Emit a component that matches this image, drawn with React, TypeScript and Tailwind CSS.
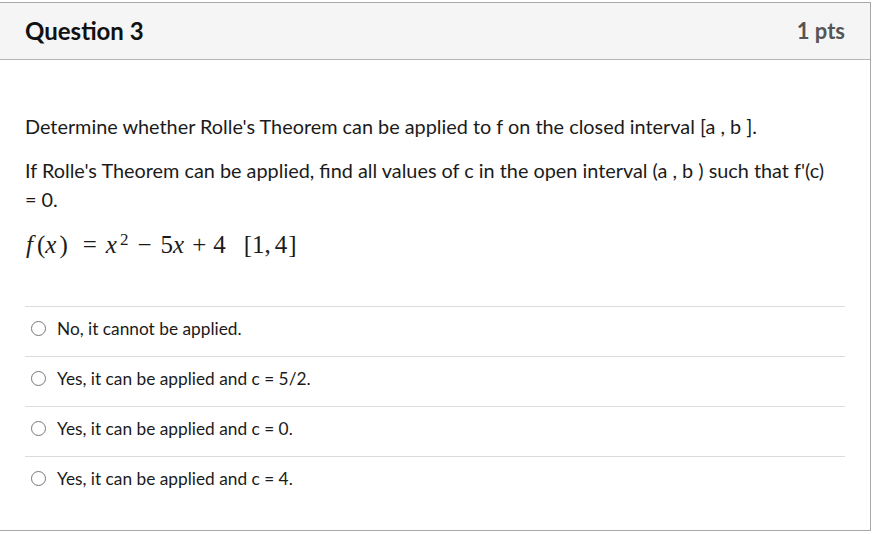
import React from "react";

const options = [
  "No, it cannot be applied.",
  "Yes, it can be applied and c = 5/2.",
  "Yes, it can be applied and c = 0.",
  "Yes, it can be applied and c = 4.",
];

export default function App() {
  return (
    <div className="w-[875px] h-[534px] bg-white pt-[2px] font-['Lato','Noto_Sans',sans-serif] text-[#1b1b1b]">
      <div className="w-[871px] h-[529px] border border-l-0 border-[#a8a8a8] flex flex-col">
        <div className="h-[57px] bg-[#f5f5f5] border-b border-[#b5b5b5] flex items-center justify-between pl-[25px] pr-[25px]">
          <h2 className="text-[24px] font-bold text-[#111] leading-none">Question 3</h2>
          <span className="text-[22px] font-bold text-[#555] leading-none">1 pts</span>
        </div>
        <div className="px-[25px] pt-[52px] text-[19.85px] leading-[29px]">
          <p>Determine whether Rolle's Theorem can be applied to f on the closed interval [a , b ].</p>
          <p className="mt-[15px]">
            If Rolle's Theorem can be applied, find all values of c in the open interval (a , b ) such that f'(c)
            <br />= 0.
          </p>
          <p className="mt-[14px] font-['Liberation_Serif',serif] text-[25px] leading-[34px] whitespace-nowrap">
            <i className="ml-[1px]">f</i>
            <span className="ml-[4px]">(</span>
            <i>x</i>
            <span className="ml-[3px]">)</span>
            <span className="ml-[15px]">=</span>
            <i className="ml-[9px]">x</i>
            <sup className="ml-[3px] text-[17px]">2</sup>
            <span className="ml-[9px]">−</span>
            <span className="ml-[9px]">5</span>
            <i>x</i>
            <span className="ml-[8px]">+</span>
            <span className="ml-[7px]">4</span>
            <span className="ml-[18px]">[</span>
            <span>1</span>
            <span>,</span>
            <span className="ml-[4px]">4</span>
            <span className="ml-[1px]">]</span>
          </p>
          <div className="mt-[44px]">
            {options.map((o) => (
              <div key={o} className="h-[50px] border-t border-[#dcdcdc] flex items-center pb-[6px]">
                <span className="w-[15px] h-[15px] rounded-full border border-[#777] ml-[6px] mr-[11px]" />
                <span className="text-[17.3px]">{o}</span>
              </div>
            ))}
          </div>
        </div>
      </div>
    </div>
  );
}
